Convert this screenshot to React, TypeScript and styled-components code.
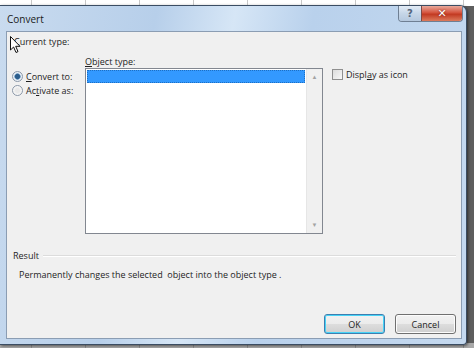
import React from 'react';
import styled, { createGlobalStyle } from 'styled-components';

const GlobalStyle = createGlobalStyle`
  html, body {
    margin: 0;
    padding: 0;
    width: 474px;
    height: 348px;
    overflow: hidden;
    background: #5e5e5e;
  }
  body {
    font-family: 'Open Sans', 'Noto Sans', 'Liberation Sans', sans-serif;
    font-size: 9px;
    color: #1e1e1e;
  }
`;

const Desktop = styled.div`
  width: 474px;
  height: 348px;
  padding: 5px 7px 5px 0;
  box-sizing: border-box;
  background-color: #5e5e5e;
  background-image:
    repeating-linear-gradient(to right, #ffffff 0 31px, #c8c8c8 31px 32px, #ffffff 32px 54px),
    repeating-linear-gradient(to right, #a9a9a9 0 31px, #8c8c8c 31px 32px, #a9a9a9 32px 54px);
  background-size: 100% 6px, 100% 5px;
  background-position: top left, bottom left;
  background-repeat: no-repeat;
`;

const Window = styled.div`
  height: 338px;
  display: flex;
  flex-direction: column;
  border: 1px solid #3b4d63;
  border-left: none;
  border-radius: 0 7px 4px 0;
  background: linear-gradient(100deg, #c9dbef 0%, #b7cfea 30%, #d6e6f6 45%, #b9d1ec 60%, #c5d9ef 100%);
  box-shadow: 1px 1px 3px rgba(0, 0, 0, 0.5);
`;

const TitleBar = styled.div`
  height: 24px;
  display: flex;
  align-items: flex-start;
  padding-left: 7px;
`;

const Title = styled.div`
  font-size: 10px;
  line-height: 12px;
  margin-top: 7px;
  color: #1a1a1a;
  flex: 1;
`;

const CaptionButtons = styled.div`
  display: flex;
  margin-right: 3px;
  border: 1px solid #6f7f93;
  border-top: none;
  border-radius: 0 0 4px 4px;
  overflow: hidden;
  height: 15px;
`;

const CaptionButton = styled.div<{ $close?: boolean }>`
  width: ${(p) => (p.$close ? '40px' : '22px')};
  display: flex;
  align-items: center;
  justify-content: center;
  font-family: 'DejaVu Sans', sans-serif;
  font-weight: bold;
  font-size: ${(p) => (p.$close ? '11px' : '10px')};
  color: ${(p) => (p.$close ? '#ffffff' : '#53657c')};
  background: ${(p) =>
    p.$close
      ? 'linear-gradient(to bottom, #e9a99b 0%, #d4533d 45%, #c23a22 55%, #dc7a5c 100%)'
      : 'linear-gradient(to bottom, #e2ebf5 0%, #c6d6e8 50%, #b5c8de 100%)'};
  border-left: ${(p) => (p.$close ? '1px solid #7d4a46' : 'none')};
  text-shadow: ${(p) => (p.$close ? '0 0 2px #6a1a0c' : 'none')};
`;

const Client = styled.div`
  flex: 1;
  position: relative;
  margin: 1px 4px 5px 6px;
  border: 1px solid #8b9db3;
  background: #f0f0f0;
  display: flex;
  flex-direction: column;
  padding: 4px 5px 4px 5px;
`;

const Label = styled.div`
  line-height: 12px;
  white-space: nowrap;
`;

const CurrentType = styled(Label)`
  padding-left: 2px;
`;

const Main = styled.div`
  display: grid;
  grid-template-columns: 73px 238px 1fr;
  margin-top: 8px;
`;

const Radios = styled.div`
  padding-top: 13px;
  display: flex;
  flex-direction: column;
`;

const RadioRow = styled.div`
  display: flex;
  align-items: center;
  height: 14px;
  gap: 3px;
`;

const RadioDot = styled.span<{ $on?: boolean }>`
  width: 9px;
  height: 9px;
  border-radius: 50%;
  border: 1px solid #8a97a8;
  background: ${(p) =>
    p.$on
      ? 'radial-gradient(circle, #2c5d8c 0 2.2px, #7fa7cb 2.6px 3px, #e9eef4 3.4px)'
      : 'radial-gradient(circle, #e8e8e8 0 2px, #f6f6f6 4px)'};
  flex: none;
`;

const ObjectColumn = styled.div`
  display: flex;
  flex-direction: column;
`;

const ListBox = styled.div`
  height: 164px;
  border: 1px solid #828790;
  background: #ffffff;
  display: flex;
`;

const ListItems = styled.div`
  flex: 1;
  padding: 1px;
`;

const SelectedRow = styled.div`
  height: 11px;
  background: #3399ff;
  border: 1px dotted #1c6fc4;
`;

const ScrollBar = styled.div`
  width: 15px;
  background: #f0f0f0;
  border-left: 1px solid #e6e6e6;
  display: flex;
  flex-direction: column;
  justify-content: space-between;
  align-items: center;
  padding: 4px 0;
  font-size: 6px;
  color: #a3a3a3;
`;

const CheckColumn = styled.div`
  padding: 12px 0 0 9px;
`;

const CheckRow = styled.div`
  display: flex;
  align-items: center;
  gap: 3px;
`;

const CheckBox = styled.span`
  width: 9px;
  height: 9px;
  border: 1px solid #8f8f8f;
  background: linear-gradient(135deg, #dcdcdc, #f8f8f8);
  flex: none;
`;

const ResultHeader = styled.div`
  display: flex;
  align-items: center;
  gap: 4px;
  margin-top: 15px;
  padding-left: 1px;
`;

const Rule = styled.div`
  flex: 1;
  height: 1px;
  background: #dcdcdc;
  border-bottom: 1px solid #ffffff;
`;

const Description = styled(Label)`
  margin-top: 7px;
  padding-left: 7px;
`;

const Buttons = styled.div`
  margin-top: auto;
  display: flex;
  justify-content: flex-end;
  gap: 10px;
`;

const Button = styled.div<{ $default?: boolean }>`
  width: 59px;
  height: 18px;
  display: flex;
  align-items: center;
  justify-content: center;
  border: 1px solid ${(p) => (p.$default ? '#3c7fb1' : '#707070')};
  border-radius: 3px;
  background: linear-gradient(to bottom, #f2f2f2 0%, #ebebeb 50%, #dddddd 51%, #cfcfcf 100%);
  box-shadow: ${(p) => (p.$default ? 'inset 0 0 0 1px #48d3f6' : 'inset 0 0 0 1px #fcfcfc')};
`;

const Underline = styled.span`
  text-decoration: underline;
`;

const Cursor = styled.svg`
  position: absolute;
  left: 3px;
  top: 4px;
`;

export default function App() {
  return (
    <>
      <GlobalStyle />
      <Desktop>
        <Window>
          <TitleBar>
            <Title>Convert</Title>
            <CaptionButtons>
              <CaptionButton>?</CaptionButton>
              <CaptionButton $close>✕</CaptionButton>
            </CaptionButtons>
          </TitleBar>
          <Client>
            <CurrentType>Current type:</CurrentType>
            <Main>
              <Radios>
                <RadioRow>
                  <RadioDot $on />
                  <span>
                    <Underline>C</Underline>onvert to:
                  </span>
                </RadioRow>
                <RadioRow>
                  <RadioDot />
                  <span>
                    Ac<Underline>t</Underline>ivate as:
                  </span>
                </RadioRow>
              </Radios>
              <ObjectColumn>
                <Label>
                  <Underline>O</Underline>bject type:
                </Label>
                <ListBox>
                  <ListItems>
                    <SelectedRow />
                  </ListItems>
                  <ScrollBar>
                    <span>▲</span>
                    <span>▼</span>
                  </ScrollBar>
                </ListBox>
              </ObjectColumn>
              <CheckColumn>
                <CheckRow>
                  <CheckBox />
                  <span>
                    Displ<Underline>a</Underline>y as icon
                  </span>
                </CheckRow>
              </CheckColumn>
            </Main>
            <ResultHeader>
              <span>Result</span>
              <Rule />
            </ResultHeader>
            <Description>Permanently changes the selected&nbsp; object into the object type .</Description>
            <Buttons>
              <Button $default>OK</Button>
              <Button>Cancel</Button>
            </Buttons>
            <Cursor width="12" height="18" viewBox="0 0 12 18">
              <path d="M0.5 0.5 L0.5 14 L3.6 11 L6 16.5 L8 15.6 L5.7 10.3 L10 10.3 Z" fill="#ffffff" stroke="#111111" strokeWidth="1" />
            </Cursor>
          </Client>
        </Window>
      </Desktop>
    </>
  );
}
